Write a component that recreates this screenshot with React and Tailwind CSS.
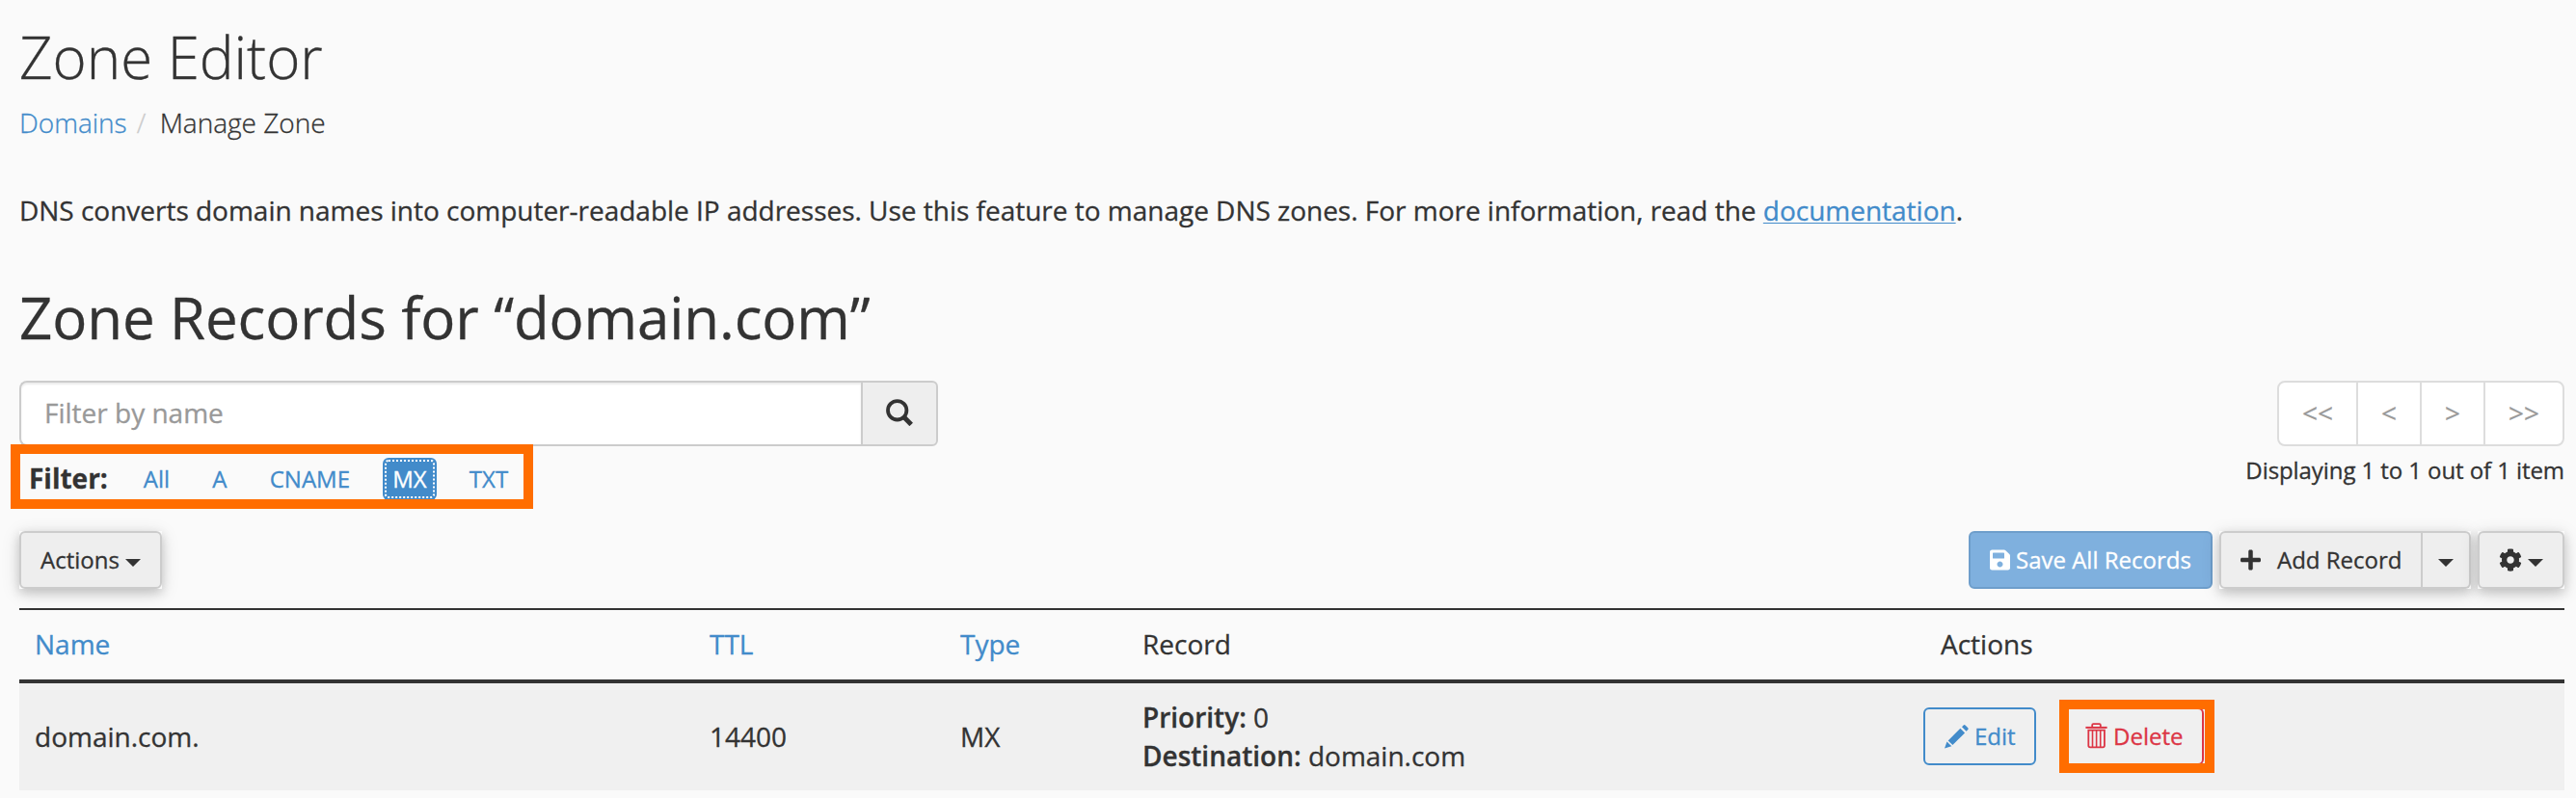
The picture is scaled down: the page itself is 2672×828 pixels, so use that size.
import React, { useState } from "react";
import { FaCog, FaPlus, FaSave } from "react-icons/fa";

const filters = ["All", "A", "CNAME", "MX", "TXT"];

const pages = [
  { label: "<<", width: "w-[82px]" },
  { label: "<", width: "w-[66px]" },
  { label: ">", width: "w-[66px]" },
  { label: ">>", width: "w-[80px]" },
];

const records = [
  {
    name: "domain.com.",
    ttl: 14400,
    type: "MX",
    priority: 0,
    destination: "domain.com",
  },
];

const columns = "grid grid-cols-[716px_260px_189px_810px_1fr]";

function Caret() {
  return (
    <span className="mt-[6px] h-0 w-0 border-x-8 border-t-8 border-x-transparent border-t-[#333]" />
  );
}

function SearchIcon() {
  return (
    <svg className="h-7 w-7" viewBox="0 0 28 28" fill="none" stroke="currentColor">
      <circle cx="11.7" cy="11.8" r="9.7" strokeWidth="3.8" />
      <path d="M18.6 18.8l7.6 7.6" strokeWidth="5" />
    </svg>
  );
}

function PencilIcon() {
  return (
    <svg className="h-6 w-6 overflow-visible" viewBox="0 0 24 24" fill="currentColor">
      <path d="M18 2.2l1.7-1.7q.9-.9 1.8 0l2.8 2.8q.9.9 0 1.8l-1.7 1.7z" />
      <path d="M16.4 3.8l4.7 4.7L8.4 21.1l-4.7-4.7z" />
      <path d="M2.5 17.4l4.8 4.8L0 24.5z" />
    </svg>
  );
}

function TrashIcon() {
  return (
    <svg
      className="h-7 w-6 overflow-visible"
      viewBox="0 0 24 28"
      fill="none"
      stroke="currentColor"
    >
      <path d="M2.4 4.9h22.2" strokeWidth="2" />
      <path d="M9.2 4.4V2.3q0-1.2 1.2-1.2h6.2q1.2 0 1.2 1.2v2.1" strokeWidth="1.8" />
      <path d="M5.3 7.6h16.6v15.9q0 1.8-1.8 1.8H7.1q-1.8 0-1.8-1.8z" strokeWidth="1.8" />
      <path d="M9.5 8v17M13.6 8v17M17.7 8v17" strokeWidth="1.6" />
    </svg>
  );
}

export default function App() {
  const [activeFilter, setActiveFilter] = useState("MX");

  return (
    <div className="h-[828px] w-[2672px] overflow-hidden bg-[#fafafa] pt-[26px] pr-3 pl-5 font-['Open_Sans',sans-serif] text-[28px] leading-10 text-[#333] [-webkit-text-stroke:0.3px]">
      <h1 className="text-[60px] leading-[66px] font-light">Zone Editor</h1>
      <nav className="mt-[15px] flex font-light">
        <a href="#" className="text-[#428bca]">
          Domains
        </a>
        <span className="ml-[10px] w-6 text-[#ccc]">/</span>
        <span>Manage Zone</span>
      </nav>

      <p className="mt-[51px] tracking-[-0.015px]">
        DNS converts domain names into computer-readable IP addresses. Use this
        feature to manage DNS zones. For more information, read the{" "}
        <a
          href="#"
          className="text-[#428bca] underline decoration-1 underline-offset-2"
        >
          documentation
        </a>
        .
      </p>

      <h2 className="mt-[58px] text-[60px] leading-[66px] tracking-[-0.1px]">
        Zone Records for “domain.com”
      </h2>

      {/* Search, type filter and paging */}
      <div className="mt-[33px] flex h-[156px] justify-between">
        <div>
          <div className="flex h-[68px] w-[953px]">
            <input
              type="text"
              placeholder="Filter by name"
              className="w-[873px] rounded-l-lg border-2 border-r-0 border-[#ccc] bg-white pb-[2px] pl-6 shadow-[inset_0_2px_2px_rgba(0,0,0,0.075)] placeholder:text-[#999]"
            />
            <button className="flex w-[80px] items-center justify-center rounded-r-md border-2 border-[#ccc] bg-[#eee] pb-[2px]">
              <SearchIcon />
            </button>
          </div>

          <div className="relative mt-3 flex h-11 w-max items-center pl-[10px]">
            <span className="mr-[27px] pb-[2px] font-bold">Filter:</span>
            <div className="flex gap-[24.2px] text-2xl leading-[44px] text-[#428bca]">
              {filters.map((filter) => (
                <button
                  key={filter}
                  onClick={() => setActiveFilter(filter)}
                  className={
                    filter === activeFilter
                      ? "h-11 rounded-md bg-[#428bca] px-[10px] text-white outline-2 -outline-offset-4 outline-white outline-dotted"
                      : "h-11 px-[10px]"
                  }
                >
                  {filter}
                </button>
              ))}
            </div>
            <div className="absolute -top-[14px] -left-[9px] h-[67px] w-[542px] border-10 border-[#ff6d00]" />
          </div>
        </div>

        <div className="flex flex-col items-end">
          <div className="flex h-[68px] overflow-hidden rounded-lg border-2 border-[#ddd] bg-white text-[#999]">
            {pages.map((page) => (
              <button
                key={page.label}
                className={`${page.width} border-r-2 border-[#ddd] pb-[2px] last:border-r-0`}
              >
                {page.label}
              </button>
            ))}
          </div>
          <p className="mt-[7px] text-2xl leading-9 tracking-[-0.08px]">
            Displaying 1 to 1 out of 1 item
          </p>
        </div>
      </div>

      {/* Toolbar */}
      <div className="flex h-[60px] justify-between text-2xl">
        <div className="shadow-[0_4px_10px_rgba(0,0,0,0.16),0_4px_20px_rgba(0,0,0,0.12)]">
          <button className="flex h-[60px] w-[148px] items-center gap-[6px] rounded-md border-2 border-[#ccc] bg-[#eee] pl-5">
            Actions
            <Caret />
          </button>
        </div>

        <div className="flex gap-[7px]">
          <button className="flex h-[60px] w-[253px] items-center gap-[6px] rounded-md border-2 border-[#6e9ecb] bg-[#7fb0de] pl-5 whitespace-nowrap text-white">
            <FaSave className="h-6 w-[21px]" />
            Save All Records
          </button>
          <div className="flex shadow-[0_4px_10px_rgba(0,0,0,0.16),0_4px_20px_rgba(0,0,0,0.12)]">
            <button className="flex h-[60px] w-[211px] items-center gap-[17px] rounded-l-md border-2 border-[#ccc] bg-[#eee] pl-5 whitespace-nowrap">
              <FaPlus className="h-6 w-[21px]" />
              Add Record
            </button>
            <button className="flex h-[60px] w-[50px] items-center justify-center rounded-r-md border-2 border-l-0 border-[#ccc] bg-[#eee]">
              <Caret />
            </button>
          </div>
          <div className="shadow-[0_4px_10px_rgba(0,0,0,0.16),0_4px_20px_rgba(0,0,0,0.12)]">
            <button className="flex h-[60px] w-[90px] items-center gap-[6px] rounded-md border-2 border-[#ccc] bg-[#eee] pl-5">
              <FaCog className="h-6 w-6" />
              <Caret />
            </button>
          </div>
        </div>
      </div>

      {/* Records table */}
      <div className="mt-5">
        <div
          className={`${columns} h-[78px] items-center border-t-2 border-b-4 border-[#333] pb-[2px]`}
        >
          <a href="#" className="pl-4 text-[#428bca]">
            Name
          </a>
          <a href="#" className="text-[#428bca]">
            TTL
          </a>
          <a href="#" className="text-[#428bca]">
            Type
          </a>
          <span>Record</span>
          <span className="pl-[18px]">Actions</span>
        </div>

        {records.map((record) => (
          <div
            key={record.name}
            className={`${columns} h-[111px] items-center bg-[#f0f0f0] pb-px`}
          >
            <span className="pl-4">{record.name}</span>
            <span>{record.ttl}</span>
            <span>{record.type}</span>
            <div>
              <p>
                <span className="font-semibold">Priority:</span> {record.priority}
              </p>
              <p>
                <span className="font-semibold">Destination:</span>{" "}
                {record.destination}
              </p>
            </div>
            <div className="flex gap-[27px] text-2xl">
              <button className="flex h-[60px] w-[117px] items-center gap-[7px] rounded-md border-2 border-[#428bca] pl-5 text-[#428bca]">
                <PencilIcon />
                Edit
              </button>
              <div className="relative">
                <button className="flex h-[60px] w-[147px] items-center gap-[7px] rounded-md border-2 border-[#dc3545] pl-5 text-[#dc3545]">
                  <TrashIcon />
                  Delete
                </button>
                <div className="absolute -top-2 -left-[3px] h-[76px] w-[161px] border-10 border-[#ff6d00]" />
              </div>
            </div>
          </div>
        ))}
      </div>
    </div>
  );
}
